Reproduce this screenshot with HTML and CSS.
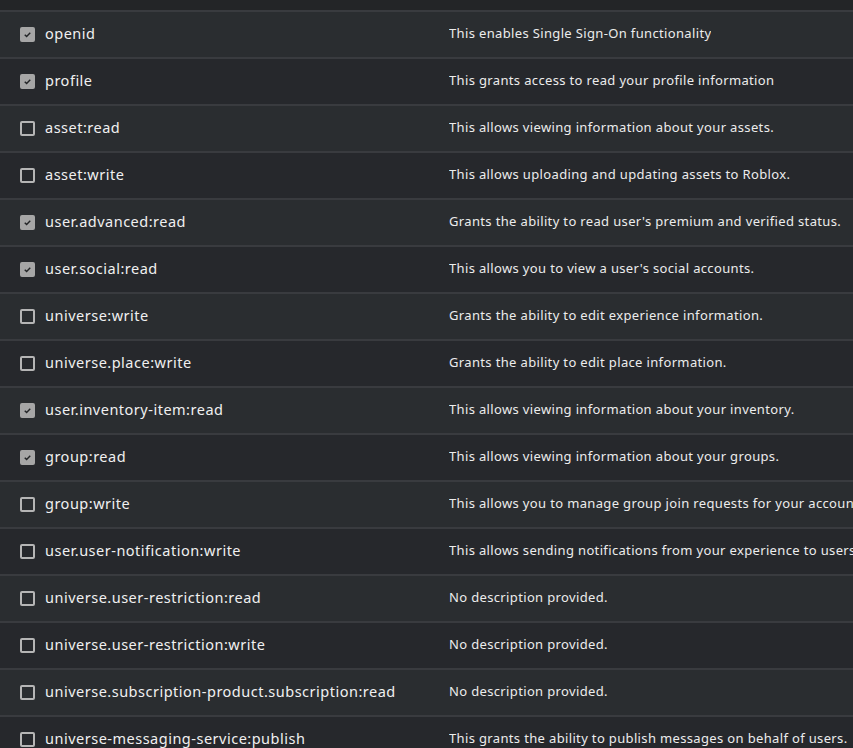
FILE: index.html
```html
<!DOCTYPE html>
<html lang="en">
<head>
    <meta charset="UTF-8">
    <meta name="viewport" content="width=device-width, initial-scale=1.0">
    <title>Scopes</title>
    <link rel="stylesheet" href="styles.css">
</head>
<body>
    <div class="scope-list">
        <div class="scope-row">
            <span class="check checked"><svg viewBox="0 0 14 14"><path d="M3.5 7.2l2.4 2.4 4.6-4.8"/></svg></span>
            <span class="scope-name">openid</span>
            <span class="scope-desc">This enables Single Sign-On functionality</span>
        </div>
        <div class="scope-row">
            <span class="check checked"><svg viewBox="0 0 14 14"><path d="M3.5 7.2l2.4 2.4 4.6-4.8"/></svg></span>
            <span class="scope-name">profile</span>
            <span class="scope-desc">This grants access to read your profile information</span>
        </div>
        <div class="scope-row">
            <span class="check"></span>
            <span class="scope-name">asset:read</span>
            <span class="scope-desc">This allows viewing information about your assets.</span>
        </div>
        <div class="scope-row">
            <span class="check"></span>
            <span class="scope-name">asset:write</span>
            <span class="scope-desc">This allows uploading and updating assets to Roblox.</span>
        </div>
        <div class="scope-row">
            <span class="check checked"><svg viewBox="0 0 14 14"><path d="M3.5 7.2l2.4 2.4 4.6-4.8"/></svg></span>
            <span class="scope-name">user.advanced:read</span>
            <span class="scope-desc">Grants the ability to read user's premium and verified status.</span>
        </div>
        <div class="scope-row">
            <span class="check checked"><svg viewBox="0 0 14 14"><path d="M3.5 7.2l2.4 2.4 4.6-4.8"/></svg></span>
            <span class="scope-name">user.social:read</span>
            <span class="scope-desc">This allows you to view a user's social accounts.</span>
        </div>
        <div class="scope-row">
            <span class="check"></span>
            <span class="scope-name">universe:write</span>
            <span class="scope-desc">Grants the ability to edit experience information.</span>
        </div>
        <div class="scope-row">
            <span class="check"></span>
            <span class="scope-name">universe.place:write</span>
            <span class="scope-desc">Grants the ability to edit place information.</span>
        </div>
        <div class="scope-row">
            <span class="check checked"><svg viewBox="0 0 14 14"><path d="M3.5 7.2l2.4 2.4 4.6-4.8"/></svg></span>
            <span class="scope-name">user.inventory-item:read</span>
            <span class="scope-desc">This allows viewing information about your inventory.</span>
        </div>
        <div class="scope-row">
            <span class="check checked"><svg viewBox="0 0 14 14"><path d="M3.5 7.2l2.4 2.4 4.6-4.8"/></svg></span>
            <span class="scope-name">group:read</span>
            <span class="scope-desc">This allows viewing information about your groups.</span>
        </div>
        <div class="scope-row">
            <span class="check"></span>
            <span class="scope-name">group:write</span>
            <span class="scope-desc">This allows you to manage group join requests for your account.</span>
        </div>
        <div class="scope-row">
            <span class="check"></span>
            <span class="scope-name">user.user-notification:write</span>
            <span class="scope-desc">This allows sending notifications from your experience to users.</span>
        </div>
        <div class="scope-row">
            <span class="check"></span>
            <span class="scope-name">universe.user-restriction:read</span>
            <span class="scope-desc">No description provided.</span>
        </div>
        <div class="scope-row">
            <span class="check"></span>
            <span class="scope-name">universe.user-restriction:write</span>
            <span class="scope-desc">No description provided.</span>
        </div>
        <div class="scope-row">
            <span class="check"></span>
            <span class="scope-name">universe.subscription-product.subscription:read</span>
            <span class="scope-desc">No description provided.</span>
        </div>
        <div class="scope-row">
            <span class="check"></span>
            <span class="scope-name">universe-messaging-service:publish</span>
            <span class="scope-desc">This grants the ability to publish messages on behalf of users.</span>
        </div>
    </div>
</body>
</html>
```

FILE: styles.css
```css
body {
    margin: 0;
    padding-top: 10px;
    background: #232527;
    font-family: 'Noto Sans', sans-serif;
    color: #f0f0f0;
    overflow: hidden;
}

.scope-list {
    display: flex;
    flex-direction: column;
}

.scope-row {
    display: flex;
    align-items: center;
    height: 45px;
    border-top: 2px solid #393b3f;
    background: #2a2d30;
    white-space: nowrap;
}

.scope-row:nth-child(even) {
    background: #26282c;
}

.check {
    box-sizing: border-box;
    width: 15px;
    height: 15px;
    margin-left: 20px;
    margin-right: 10px;
    border: 2px solid #b5b5b5;
    border-radius: 2px;
    flex-shrink: 0;
    display: flex;
}

.check.checked {
    background: #a6a6a6;
    border-color: #a6a6a6;
}

.check svg {
    width: 100%;
    height: 100%;
    fill: none;
    stroke: #232527;
    stroke-width: 1.8;
}

.scope-name {
    width: 404px;
    font-size: 14.5px;
    letter-spacing: 0.5px;
    padding-bottom: 3px;
    flex-shrink: 0;
}

.scope-desc {
    font-size: 13px;
    letter-spacing: 0.35px;
    padding-bottom: 3px;
    color: #ececec;
    overflow: hidden;
}
```
